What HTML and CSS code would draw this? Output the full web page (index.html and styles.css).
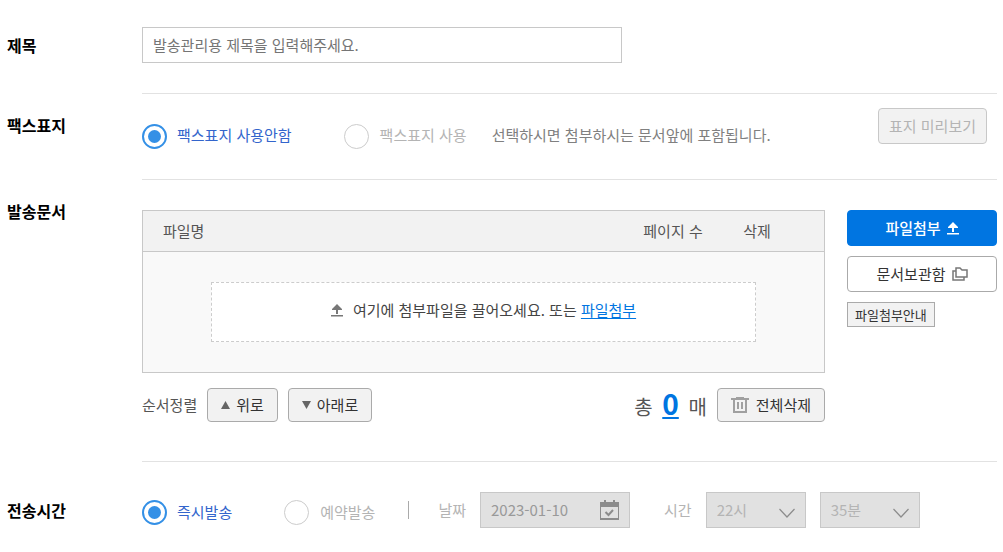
FILE: index.html
```html
<!DOCTYPE HTML>
<html lang="ko">
	<head>
		<meta charset="utf-8"/>
		<meta name="viewport" content="width=device-width, initial-scale=1"/>
		<title>팩스 발송</title>
		<link rel="stylesheet" href="styles.css">
	</head>
	<body>
		<form class="fax_form">
			<!-- 제목 -->
			<div class="row row_title">
				<label class="row_label" for="faxTitle">제목</label>
				<div class="row_field">
					<input class="txt_input" type="text" id="faxTitle" placeholder="발송관리용 제목을 입력해주세요."/>
				</div>
			</div>

			<!-- 팩스표지 -->
			<div class="row row_cover">
				<div class="row_label" id="coverLabel">팩스표지</div>
				<div class="row_field">
					<div class="radios" role="radiogroup" aria-labelledby="coverLabel">
						<label class="radio"><input type="radio" name="cover" checked/><span>팩스표지 사용안함</span></label>
						<label class="radio"><input type="radio" name="cover"/><span>팩스표지 사용</span></label>
						<span class="note">선택하시면 첨부하시는 문서앞에 포함됩니다.</span>
					</div>
					<button class="btn btn_preview" type="button" disabled>표지 미리보기</button>
				</div>
			</div>

			<!-- 발송문서 -->
			<div class="row row_doc">
				<div class="row_label">발송문서</div>
				<div class="row_field">
					<div class="doc_main">
						<table class="file_table">
							<thead>
								<tr>
									<th class="c_name">파일명</th>
									<th class="c_page">페이지 수</th>
									<th class="c_del">삭제</th>
								</tr>
							</thead>
							<tbody>
								<tr>
									<td colspan="3">
										<div class="drop">
											<svg class="ico_up" width="12" height="13" viewBox="0 0 12 13"><path d="M6 0l5 5v1H7v4H5V6H1V5zM0 11h12v1.500H0z" fill="currentColor"/></svg>
											<span>여기에 첨부파일을 끌어오세요. 또는 <a href="#">파일첨부</a></span>
										</div>
									</td>
								</tr>
							</tbody>
						</table>
						<div class="doc_tools">
							<span class="sort_txt">순서정렬</span>
							<button class="btn btn_sort" type="button"><svg width="9" height="8" viewBox="0 0 9 8"><path d="M4.500 0L9 8H0z" fill="#666"/></svg>위로</button>
							<button class="btn btn_sort" type="button"><svg width="9" height="8" viewBox="0 0 9 8"><path d="M0 0h9L4.500 8z" fill="#666"/></svg>아래로</button>
							<div class="total">총 <a href="#">0</a> 매</div>
							<button class="btn btn_del" type="button">
								<svg width="18" height="16" viewBox="0 0 18 16"><path d="M5 0h8v1h5v2H0V1h5zM2 3h2v11h10V3h2v13H2zM6 5h2v7H6zM10 5h2v7h-2z" fill="#a0a0a0"/></svg>전체삭제
							</button>
						</div>
					</div>
					<div class="doc_side">
						<button class="btn btn_attach" type="button">파일첨부<svg class="ico_up" width="12" height="13" viewBox="0 0 12 13"><path d="M6 0l5 5v1H7v4H5V6H1V5zM0 11h12v1.500H0z" fill="currentColor"/></svg></button>
						<button class="btn btn_box" type="button">문서보관함<svg width="16" height="14" viewBox="0 0 16 14"><path d="M4 1h4l2 2h5v7H4zM4 4H1v9h11v-3" fill="none" stroke="#777" stroke-width="1.500"/></svg></button>
						<button class="btn btn_guide" type="button">파일첨부안내</button>
					</div>
				</div>
			</div>

			<!-- 전송시간 -->
			<div class="row row_time">
				<div class="row_label" id="timeLabel">전송시간</div>
				<div class="row_field">
					<div class="radios" role="radiogroup" aria-labelledby="timeLabel">
						<label class="radio"><input type="radio" name="send" checked/><span>즉시발송</span></label>
						<label class="radio"><input type="radio" name="send"/><span>예약발송</span></label>
					</div>
					<span class="bar"></span>
					<label class="sub_label" for="sendDate">날짜</label>
					<div class="ctrl ctrl_date">
						<input type="text" id="sendDate" value="2023-01-10" disabled/>
						<svg width="19" height="20" viewBox="0 0 19 20"><path d="M0 2h4V0h2v2h7V0h2v2h4v18H0zM1 7v11h17V7z" fill="#8c8c8c" fill-rule="evenodd"/><path d="M5.500 12l3 3L13 10" fill="none" stroke="#8c8c8c" stroke-width="2"/></svg>
					</div>
					<label class="sub_label" for="sendHour">시간</label>
					<div class="ctrl ctrl_sel">
						<select id="sendHour" disabled><option>22시</option></select>
						<svg width="16" height="10" viewBox="0 0 16 10"><path d="M.5 1L8 9l7.500-8" fill="none" stroke="#8c8c8c" stroke-width="1.200"/></svg>
					</div>
					<div class="ctrl ctrl_sel">
						<select aria-label="분" disabled><option>35분</option></select>
						<svg width="16" height="10" viewBox="0 0 16 10"><path d="M.5 1L8 9l7.500-8" fill="none" stroke="#8c8c8c" stroke-width="1.200"/></svg>
					</div>
				</div>
			</div>
		</form>
	</body>
</html>
```
FILE: styles.css
```css
*{box-sizing: border-box;}
body{margin: 0;background: #fff;color: #444;font-size: 15px;line-height: 24px;font-family: "Noto Sans CJK KR", sans-serif;}
input,select,button{margin: 0;font-family: inherit;font-size: 15px;line-height: 24px;}
a{color: #0075e1;text-underline-offset: 2px;}
svg{flex: none;display: block;}

.fax_form{padding: 0 6px 0 7px;}
.row{display: grid;grid-template-columns: 135px 1fr;}
.row_label{padding-top: 19px;color: #000;font-size: 16px;font-weight: bold;}
.row_field{display: flex;align-items: flex-start;border-bottom: 1px solid #e2e2e2;}

.row_title .row_label{padding-top: 33px;}
.row_title .row_field{padding: 27px 0 30px;}
.row_cover .row_field{padding: 14px 0 30px;}
.row_cover .radios{padding-top: 15px;}
.row_doc .row_field{gap: 22px;padding: 30px 0 39px;}
.row_time .row_label{padding-top: 36px;}
.row_time .row_field{align-items: center;padding: 30px 0 24px;border-bottom: 0;}
.row_time .radios{padding-top: 5px;}

.txt_input{width: 480px;max-width: 100%;height: 36px;padding: 0 10px 2px;border: 1px solid #c8c8c8;color: #444;}
.txt_input::placeholder{color: #757575;opacity: 1;}

/* 라디오 */
.radios{display: flex;align-items: center;}
.radio{display: flex;align-items: center;gap: 10px;margin-right: 52px;color: #b4b4b4;}
.radio span,.note{padding-bottom: 2px;}
.radio input{appearance: none;flex: none;width: 25px;height: 25px;padding: 4px;border: 1px solid #ccc;border-radius: 50%;}
.radio input:checked{border: 2px solid #3490e6;background: #3490e6 content-box;}
.radio input:checked + span{color: #3365cc;}
.radio:nth-child(2){gap: 11px;margin-right: 25px;}
.note{color: #808080;}

/* 버튼 */
.btn{display: flex;align-items: center;justify-content: center;height: 34px;padding: 0 13px;border: 1px solid #aaa;border-radius: 4px;background: #f2f2f2;color: #333;white-space: nowrap;}
.btn_preview{height: 36px;margin: 0 10px 0 auto;padding: 0 10px;border-color: #c8c8c8;color: #b4b4b4;}
.btn_sort{gap: 6px;margin-left: 10px;}
.btn_del{gap: 7px;}

/* 첨부파일 목록 */
.doc_main{flex: 1;min-width: 0;}
.file_table{width: 100%;border: 1px solid #c8c8c8;border-spacing: 0;background: #f9f9f9;}
.file_table th{height: 41px;padding: 0;border-bottom: 1px solid #c8c8c8;background: #f2f2f2;color: #555;font-weight: normal;}
.file_table .c_name{padding-left: 20px;text-align: left;}
.file_table .c_page{width: 84px;}
.file_table .c_del{width: 109px;padding-right: 25px;}
.file_table td{padding: 30px 0;}
.drop{display: flex;align-items: center;justify-content: center;gap: 10px;width: 80%;height: 60px;margin: 0 auto;padding-bottom: 4px;border: 1px dashed #ccc;background: #fff;}
.drop .ico_up{color: #777;}

.doc_tools{display: flex;align-items: center;height: 34px;margin-top: 15px;}
.sort_txt{color: #555;}
.total{margin: 0 10px 0 auto;color: #555;font-size: 20px;line-height: 34px;}
.total a{margin: 0 4px;font-size: 28px;font-weight: bold;}

.doc_side{display: flex;flex-direction: column;align-items: flex-start;gap: 10px;width: 150px;}
.btn_attach,.btn_box{gap: 6px;width: 100%;height: 36px;}
.btn_attach{border-color: #0075e1;background: #0075e1;color: #fff;font-weight: 500;}
.btn_box{background: #fff;}
.btn_guide{height: 25px;padding: 0 7px;border-radius: 0;font-size: 13px;}

/* 전송시간 */
.bar{width: 1px;height: 18px;margin: 0 29px 0 8px;background: #aaa;}
.sub_label{margin-right: 14px;color: #b4b4b4;}
.ctrl{position: relative;margin-right: 14px;}
.ctrl input,.ctrl select{display: block;width: 100%;height: 36px;padding: 0 10px;border: 1px solid #c8c8c8;border-radius: 0;background: #e1e1e1;color: #b4b4b4;opacity: 1;}
.ctrl input{padding-bottom: 2px;color: #999;}
.ctrl select{appearance: none;}
.ctrl svg{position: absolute;top: 8px;right: 11px;pointer-events: none;}
.ctrl_date{width: 150px;margin-right: 34px;}
.ctrl_sel{width: 100px;}
.ctrl_sel svg{top: 16px;}
```
